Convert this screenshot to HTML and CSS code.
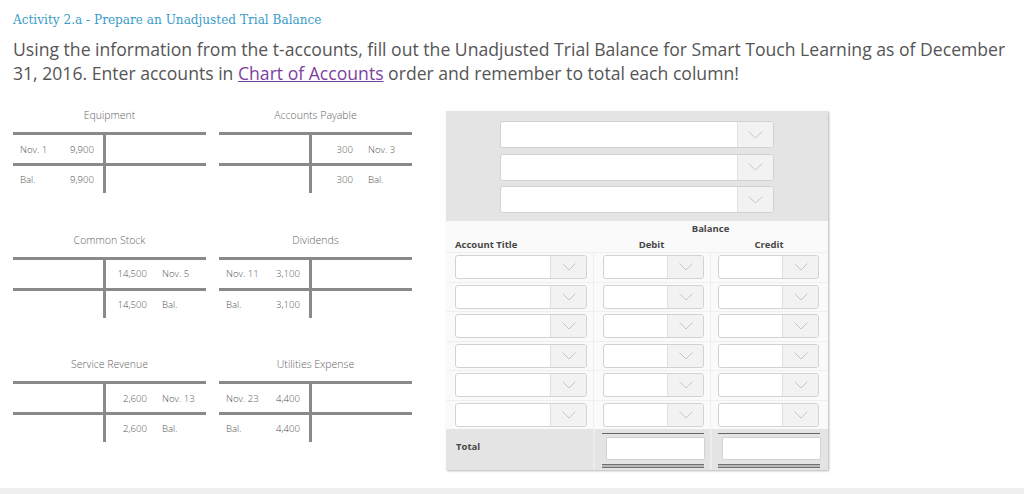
FILE: index.html
```html
<!DOCTYPE html>
<html lang="en">
<head>
<meta charset="utf-8">
<title>Activity 2.a - Prepare an Unadjusted Trial Balance</title>
<link rel="stylesheet" href="styles.css">
</head>
<body>
<div class="page">
  <h1 class="activity">Activity 2.a - Prepare an Unadjusted Trial Balance</h1>
  <p class="intro">Using the information from the t-accounts, fill out the Unadjusted Trial Balance for Smart Touch Learning as of December 31, 2016. Enter accounts in <a href="#">Chart of Accounts</a> order and remember to total each column!</p>

  <div class="work">
    <div class="taccounts">
      <div class="tacct">
        <div class="tname">Equipment</div>
        <div class="tbody">
          <div class="trow"><div class="dr"><span>Nov. 1</span><span>9,900</span></div><div class="cr"></div></div>
          <div class="trow"><div class="dr"><span>Bal.</span><span>9,900</span></div><div class="cr"></div></div>
        </div>
      </div>
      <div class="tacct">
        <div class="tname">Accounts Payable</div>
        <div class="tbody">
          <div class="trow"><div class="dr"></div><div class="cr"><span class="amt">300</span><span class="date">Nov. 3</span></div></div>
          <div class="trow"><div class="dr"></div><div class="cr"><span class="amt">300</span><span class="date">Bal.</span></div></div>
        </div>
      </div>
      <div class="tacct">
        <div class="tname">Common Stock</div>
        <div class="tbody">
          <div class="trow"><div class="dr"></div><div class="cr"><span class="amt">14,500</span><span class="date">Nov. 5</span></div></div>
          <div class="trow"><div class="dr"></div><div class="cr"><span class="amt">14,500</span><span class="date">Bal.</span></div></div>
        </div>
      </div>
      <div class="tacct">
        <div class="tname">Dividends</div>
        <div class="tbody">
          <div class="trow"><div class="dr"><span>Nov. 11</span><span>3,100</span></div><div class="cr"></div></div>
          <div class="trow"><div class="dr"><span>Bal.</span><span>3,100</span></div><div class="cr"></div></div>
        </div>
      </div>
      <div class="tacct">
        <div class="tname">Service Revenue</div>
        <div class="tbody">
          <div class="trow"><div class="dr"></div><div class="cr"><span class="amt">2,600</span><span class="date">Nov. 13</span></div></div>
          <div class="trow"><div class="dr"></div><div class="cr"><span class="amt">2,600</span><span class="date">Bal.</span></div></div>
        </div>
      </div>
      <div class="tacct">
        <div class="tname">Utilities Expense</div>
        <div class="tbody">
          <div class="trow"><div class="dr"><span>Nov. 23</span><span>4,400</span></div><div class="cr"></div></div>
          <div class="trow"><div class="dr"><span>Bal.</span><span>4,400</span></div><div class="cr"></div></div>
        </div>
      </div>
    </div>

    <div class="tb">
      <div class="tb-top">
        <div class="sel wide"><div class="field"></div><div class="btn"><svg width="15" height="8" viewBox="0 0 15 8"><path d="M0.5 0.5 L7.5 7 L14.5 0.5" fill="none" stroke="#c6c6c6" stroke-width="1"/></svg></div></div>
        <div class="sel wide"><div class="field"></div><div class="btn"><svg width="15" height="8" viewBox="0 0 15 8"><path d="M0.5 0.5 L7.5 7 L14.5 0.5" fill="none" stroke="#c6c6c6" stroke-width="1"/></svg></div></div>
        <div class="sel wide"><div class="field"></div><div class="btn"><svg width="15" height="8" viewBox="0 0 15 8"><path d="M0.5 0.5 L7.5 7 L14.5 0.5" fill="none" stroke="#c6c6c6" stroke-width="1"/></svg></div></div>
      </div>

      <div class="tb-head">
        <div class="h-balance">Balance</div>
        <div class="h-title">Account Title</div>
        <div class="h-debit">Debit</div>
        <div class="h-credit">Credit</div>
      </div>

      <div class="tb-row">
        <div class="cell c1"><div class="sel sm w1"><div class="field"></div><div class="btn"><svg width="14" height="8" viewBox="0 0 14 8"><path d="M0.5 0.5 L7 7 L13.5 0.5" fill="none" stroke="#c6c6c6" stroke-width="1"/></svg></div></div></div>
        <div class="cell c2"><div class="sel sm w2"><div class="field"></div><div class="btn"><svg width="14" height="8" viewBox="0 0 14 8"><path d="M0.5 0.5 L7 7 L13.5 0.5" fill="none" stroke="#c6c6c6" stroke-width="1"/></svg></div></div></div>
        <div class="cell c3"><div class="sel sm w2"><div class="field"></div><div class="btn"><svg width="14" height="8" viewBox="0 0 14 8"><path d="M0.5 0.5 L7 7 L13.5 0.5" fill="none" stroke="#c6c6c6" stroke-width="1"/></svg></div></div></div>
      </div>
      <div class="tb-row">
        <div class="cell c1"><div class="sel sm w1"><div class="field"></div><div class="btn"><svg width="14" height="8" viewBox="0 0 14 8"><path d="M0.5 0.5 L7 7 L13.5 0.5" fill="none" stroke="#c6c6c6" stroke-width="1"/></svg></div></div></div>
        <div class="cell c2"><div class="sel sm w2"><div class="field"></div><div class="btn"><svg width="14" height="8" viewBox="0 0 14 8"><path d="M0.5 0.5 L7 7 L13.5 0.5" fill="none" stroke="#c6c6c6" stroke-width="1"/></svg></div></div></div>
        <div class="cell c3"><div class="sel sm w2"><div class="field"></div><div class="btn"><svg width="14" height="8" viewBox="0 0 14 8"><path d="M0.5 0.5 L7 7 L13.5 0.5" fill="none" stroke="#c6c6c6" stroke-width="1"/></svg></div></div></div>
      </div>
      <div class="tb-row">
        <div class="cell c1"><div class="sel sm w1"><div class="field"></div><div class="btn"><svg width="14" height="8" viewBox="0 0 14 8"><path d="M0.5 0.5 L7 7 L13.5 0.5" fill="none" stroke="#c6c6c6" stroke-width="1"/></svg></div></div></div>
        <div class="cell c2"><div class="sel sm w2"><div class="field"></div><div class="btn"><svg width="14" height="8" viewBox="0 0 14 8"><path d="M0.5 0.5 L7 7 L13.5 0.5" fill="none" stroke="#c6c6c6" stroke-width="1"/></svg></div></div></div>
        <div class="cell c3"><div class="sel sm w2"><div class="field"></div><div class="btn"><svg width="14" height="8" viewBox="0 0 14 8"><path d="M0.5 0.5 L7 7 L13.5 0.5" fill="none" stroke="#c6c6c6" stroke-width="1"/></svg></div></div></div>
      </div>
      <div class="tb-row">
        <div class="cell c1"><div class="sel sm w1"><div class="field"></div><div class="btn"><svg width="14" height="8" viewBox="0 0 14 8"><path d="M0.5 0.5 L7 7 L13.5 0.5" fill="none" stroke="#c6c6c6" stroke-width="1"/></svg></div></div></div>
        <div class="cell c2"><div class="sel sm w2"><div class="field"></div><div class="btn"><svg width="14" height="8" viewBox="0 0 14 8"><path d="M0.5 0.5 L7 7 L13.5 0.5" fill="none" stroke="#c6c6c6" stroke-width="1"/></svg></div></div></div>
        <div class="cell c3"><div class="sel sm w2"><div class="field"></div><div class="btn"><svg width="14" height="8" viewBox="0 0 14 8"><path d="M0.5 0.5 L7 7 L13.5 0.5" fill="none" stroke="#c6c6c6" stroke-width="1"/></svg></div></div></div>
      </div>
      <div class="tb-row">
        <div class="cell c1"><div class="sel sm w1"><div class="field"></div><div class="btn"><svg width="14" height="8" viewBox="0 0 14 8"><path d="M0.5 0.5 L7 7 L13.5 0.5" fill="none" stroke="#c6c6c6" stroke-width="1"/></svg></div></div></div>
        <div class="cell c2"><div class="sel sm w2"><div class="field"></div><div class="btn"><svg width="14" height="8" viewBox="0 0 14 8"><path d="M0.5 0.5 L7 7 L13.5 0.5" fill="none" stroke="#c6c6c6" stroke-width="1"/></svg></div></div></div>
        <div class="cell c3"><div class="sel sm w2"><div class="field"></div><div class="btn"><svg width="14" height="8" viewBox="0 0 14 8"><path d="M0.5 0.5 L7 7 L13.5 0.5" fill="none" stroke="#c6c6c6" stroke-width="1"/></svg></div></div></div>
      </div>
      <div class="tb-row">
        <div class="cell c1"><div class="sel sm w1"><div class="field"></div><div class="btn"><svg width="14" height="8" viewBox="0 0 14 8"><path d="M0.5 0.5 L7 7 L13.5 0.5" fill="none" stroke="#c6c6c6" stroke-width="1"/></svg></div></div></div>
        <div class="cell c2"><div class="sel sm w2"><div class="field"></div><div class="btn"><svg width="14" height="8" viewBox="0 0 14 8"><path d="M0.5 0.5 L7 7 L13.5 0.5" fill="none" stroke="#c6c6c6" stroke-width="1"/></svg></div></div></div>
        <div class="cell c3"><div class="sel sm w2"><div class="field"></div><div class="btn"><svg width="14" height="8" viewBox="0 0 14 8"><path d="M0.5 0.5 L7 7 L13.5 0.5" fill="none" stroke="#c6c6c6" stroke-width="1"/></svg></div></div></div>
      </div>

      <div class="tb-total">
        <div class="tcell t1">Total</div>
        <div class="tcell t2"><div class="single"></div><div class="tbox"></div><div class="double"></div></div>
        <div class="tcell t3"><div class="single"></div><div class="tbox"></div><div class="double"></div></div>
      </div>
    </div>
  </div>
</div>
<div class="band"></div>
</body>
</html>
```

FILE: styles.css
```css
* { box-sizing: border-box; }

body {
  margin: 0;
  background: #ffffff;
  font-family: "Open Sans", "Liberation Sans", sans-serif;
}

.page {
  height: 488px;
  padding: 12px 0 0 13px;
  overflow: hidden;
}

.activity {
  margin: 0;
  font-family: "DejaVu Serif", "Liberation Serif", serif;
  font-weight: normal;
  font-size: 12.1px;
  line-height: 16px;
  color: #399cc8;
}

.intro {
  margin: 9px 0 0;
  width: 1000px;
  font-size: 17.6px;
  line-height: 24px;
  color: #555555;
}

.intro a {
  color: #7d3f9f;
  text-decoration: underline;
}

.work {
  display: flex;
  align-items: flex-start;
  gap: 34px;
  margin-top: 22px;
}

/* T-accounts */
.taccounts {
  display: grid;
  grid-template-columns: 193px 193px;
  column-gap: 13px;
  row-gap: 38.5px;
}

.tname {
  text-align: center;
  font-size: 10.5px;
  font-weight: 300;
  line-height: 16px;
  color: #666666;
  margin-bottom: 9px;
}

.tbody {
  border-top: 3px solid #8a8a8a;
}

.trow {
  display: grid;
  grid-template-columns: 93px 1fr;
  height: 28px;
  font-size: 9.6px;
  font-weight: 300;
  color: #555555;
}

.trow + .trow {
  height: 30px;
  border-top: 3px solid #8a8a8a;
}

.dr {
  display: flex;
  align-items: center;
  justify-content: space-between;
  padding: 0 9px 0 7px;
  border-right: 3px solid #8a8a8a;
}

.cr {
  display: flex;
  align-items: center;
}

.cr .amt {
  width: 41px;
  text-align: right;
}

.cr .date {
  margin-left: 15px;
}

/* Trial balance panel */
.tb {
  width: 382px;
  margin-top: 4px;
  background: #fafafa;
  box-shadow: 1px 1px 2px rgba(0, 0, 0, 0.3);
}

.tb-top {
  height: 110px;
  padding-top: 10px;
  background: #e4e4e4;
  display: flex;
  flex-direction: column;
  align-items: center;
  gap: 5.5px;
}

.sel {
  display: flex;
  height: 27px;
  background: #ffffff;
  border: 1px solid #d2d2d2;
  border-radius: 3px;
  overflow: hidden;
}

.sel .field {
  flex: 1;
}

.sel .btn {
  width: 36px;
  background: #f2f2f2;
  border-left: 1px solid #e0e0e0;
  display: flex;
  align-items: center;
  justify-content: center;
}

.sel.wide { width: 274px; }
.sel.sm { height: 24px; }
.sel.w1 { width: 132px; }
.sel.w2 { width: 101px; }

.tb-head {
  display: grid;
  grid-template-columns: 147px 117px 118px;
  grid-template-rows: 16px 15px;
  font-size: 9.5px;
  font-weight: bold;
  color: #474747;
}

.h-balance {
  grid-column: 2 / span 2;
  grid-row: 1;
  text-align: center;
  line-height: 16px;
}

.h-title {
  grid-column: 1;
  grid-row: 2;
  padding-left: 9px;
  line-height: 15px;
}

.h-debit, .h-credit {
  grid-row: 2;
  text-align: center;
  line-height: 15px;
}

.h-debit { grid-column: 2; }
.h-credit { grid-column: 3; }

.tb-row {
  display: grid;
  grid-template-columns: 147px 117px 118px;
  height: 29.5px;
}

.cell {
  display: flex;
  align-items: center;
  border-top: 1px solid #efefef;
}

.cell.c1 { padding-left: 9px; }
.cell.c2 { padding-left: 9px; border-left: 1px solid #efefef; }
.cell.c3 { padding-left: 7px; border-left: 1px solid #efefef; }

.tb-total {
  display: grid;
  grid-template-columns: 147px 117px 118px;
  height: 41px;
  background: #e4e4e4;
}

.tcell.t1 {
  display: flex;
  align-items: center;
  padding: 0 0 6px 10px;
  font-size: 9.5px;
  font-weight: bold;
  color: #474747;
}

.tcell.t2, .tcell.t3 {
  border-left: 2px solid #ececec;
  padding-top: 4px;
}

.tcell.t2 { padding-left: 7px; }
.tcell.t3 { padding-left: 6px; }

.single {
  width: 102px;
  height: 1px;
  background: #666666;
}

.tbox {
  width: 99px;
  height: 23px;
  margin: 3px 0 0 4px;
  background: #ffffff;
  border: 1px solid #d2d2d2;
  border-radius: 2px;
}

.double {
  width: 102px;
  height: 4px;
  margin-top: 4px;
  border-top: 1px solid #707070;
  border-bottom: 1px solid #707070;
  background: #b8b8b8;
}

.band {
  height: 6px;
  background: #efefef;
}
```
